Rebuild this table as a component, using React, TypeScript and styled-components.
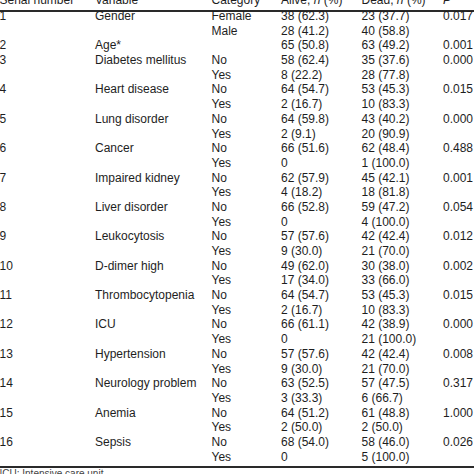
import React from "react";
import styled, { createGlobalStyle } from "styled-components";

const GlobalStyle = createGlobalStyle`
  html, body {
    margin: 0;
    padding: 0;
    background: #ffffff;
    overflow: hidden;
  }
  body {
    font-family: "Liberation Sans", Arial, sans-serif;
  }
`;

const Page = styled.div`
  width: 560px;
  margin-top: -7px;
  margin-left: -0.5px;
`;

const Table = styled.table`
  border-collapse: collapse;
  table-layout: fixed;
  width: 540px;
  font-size: 12px;
  color: #1e1e1e;
`;

const HeadCell = styled.th`
  text-align: left;
  font-weight: normal;
  padding: 0 0 3px 0;
  line-height: 14px;
  border-bottom: 2px solid #2a2a2a;
  white-space: nowrap;
`;

const Cell = styled.td<{ $last?: boolean }>`
  padding: 0 0 ${(p) => (p.$last ? "3.5px" : "5px")} 0;
  line-height: 9.69px;
  white-space: nowrap;
  vertical-align: top;
  border-bottom: ${(p) => (p.$last ? "2px solid #2a2a2a" : "none")};
`;

const Footnote = styled.div`
  font-size: 10px;
  line-height: 12px;
  color: #444;
  padding-top: 0;
`;

type Row = {
  serial?: string;
  variable?: string;
  category?: string;
  alive: string;
  dead: string;
  p?: string;
};

const rows: Row[] = [
  { serial: "1", variable: "Gender", category: "Female", alive: "38 (62.3)", dead: "23 (37.7)", p: "0.017" },
  { category: "Male", alive: "28 (41.2)", dead: "40 (58.8)" },
  { serial: "2", variable: "Age*", alive: "65 (50.8)", dead: "63 (49.2)", p: "0.001" },
  { serial: "3", variable: "Diabetes mellitus", category: "No", alive: "58 (62.4)", dead: "35 (37.6)", p: "0.000" },
  { category: "Yes", alive: "8 (22.2)", dead: "28 (77.8)" },
  { serial: "4", variable: "Heart disease", category: "No", alive: "64 (54.7)", dead: "53 (45.3)", p: "0.015" },
  { category: "Yes", alive: "2 (16.7)", dead: "10 (83.3)" },
  { serial: "5", variable: "Lung disorder", category: "No", alive: "64 (59.8)", dead: "43 (40.2)", p: "0.000" },
  { category: "Yes", alive: "2 (9.1)", dead: "20 (90.9)" },
  { serial: "6", variable: "Cancer", category: "No", alive: "66 (51.6)", dead: "62 (48.4)", p: "0.488" },
  { category: "Yes", alive: "0", dead: "1 (100.0)" },
  { serial: "7", variable: "Impaired kidney", category: "No", alive: "62 (57.9)", dead: "45 (42.1)", p: "0.001" },
  { category: "Yes", alive: "4 (18.2)", dead: "18 (81.8)" },
  { serial: "8", variable: "Liver disorder", category: "No", alive: "66 (52.8)", dead: "59 (47.2)", p: "0.054" },
  { category: "Yes", alive: "0", dead: "4 (100.0)" },
  { serial: "9", variable: "Leukocytosis", category: "No", alive: "57 (57.6)", dead: "42 (42.4)", p: "0.012" },
  { category: "Yes", alive: "9 (30.0)", dead: "21 (70.0)" },
  { serial: "10", variable: "D-dimer high", category: "No", alive: "49 (62.0)", dead: "30 (38.0)", p: "0.002" },
  { category: "Yes", alive: "17 (34.0)", dead: "33 (66.0)" },
  { serial: "11", variable: "Thrombocytopenia", category: "No", alive: "64 (54.7)", dead: "53 (45.3)", p: "0.015" },
  { category: "Yes", alive: "2 (16.7)", dead: "10 (83.3)" },
  { serial: "12", variable: "ICU", category: "No", alive: "66 (61.1)", dead: "42 (38.9)", p: "0.000" },
  { category: "Yes", alive: "0", dead: "21 (100.0)" },
  { serial: "13", variable: "Hypertension", category: "No", alive: "57 (57.6)", dead: "42 (42.4)", p: "0.008" },
  { category: "Yes", alive: "9 (30.0)", dead: "21 (70.0)" },
  { serial: "14", variable: "Neurology problem", category: "No", alive: "63 (52.5)", dead: "57 (47.5)", p: "0.317" },
  { category: "Yes", alive: "3 (33.3)", dead: "6 (66.7)" },
  { serial: "15", variable: "Anemia", category: "No", alive: "64 (51.2)", dead: "61 (48.8)", p: "1.000" },
  { category: "Yes", alive: "2 (50.0)", dead: "2 (50.0)" },
  { serial: "16", variable: "Sepsis", category: "No", alive: "68 (54.0)", dead: "58 (46.0)", p: "0.026" },
  { category: "Yes", alive: "0", dead: "5 (100.0)" },
];

const widths = [95.5, 116.5, 69.5, 80.5, 81.5, 96.5];

export default function App() {
  return (
    <Page>
      <GlobalStyle />
      <Table>
        <colgroup>
          {widths.map((w, i) => (
            <col key={i} style={{ width: w }} />
          ))}
        </colgroup>
        <thead>
          <tr>
            <HeadCell>Serial number</HeadCell>
            <HeadCell>Variable</HeadCell>
            <HeadCell>Category</HeadCell>
            <HeadCell>
              Alive, <i>n</i> (%)
            </HeadCell>
            <HeadCell>
              Dead, <i>n</i> (%)
            </HeadCell>
            <HeadCell>
              <i>P</i>
            </HeadCell>
          </tr>
        </thead>
        <tbody>
          {rows.map((r, i) => {
            const last = i === rows.length - 1;
            return (
              <tr key={i}>
                <Cell $last={last}>{r.serial ?? ""}</Cell>
                <Cell $last={last}>{r.variable ?? ""}</Cell>
                <Cell $last={last}>{r.category ?? ""}</Cell>
                <Cell $last={last}>{r.alive}</Cell>
                <Cell $last={last}>{r.dead}</Cell>
                <Cell $last={last}>{r.p ?? ""}</Cell>
              </tr>
            );
          })}
        </tbody>
      </Table>
      <Footnote>ICU: Intensive care unit</Footnote>
    </Page>
  );
}
